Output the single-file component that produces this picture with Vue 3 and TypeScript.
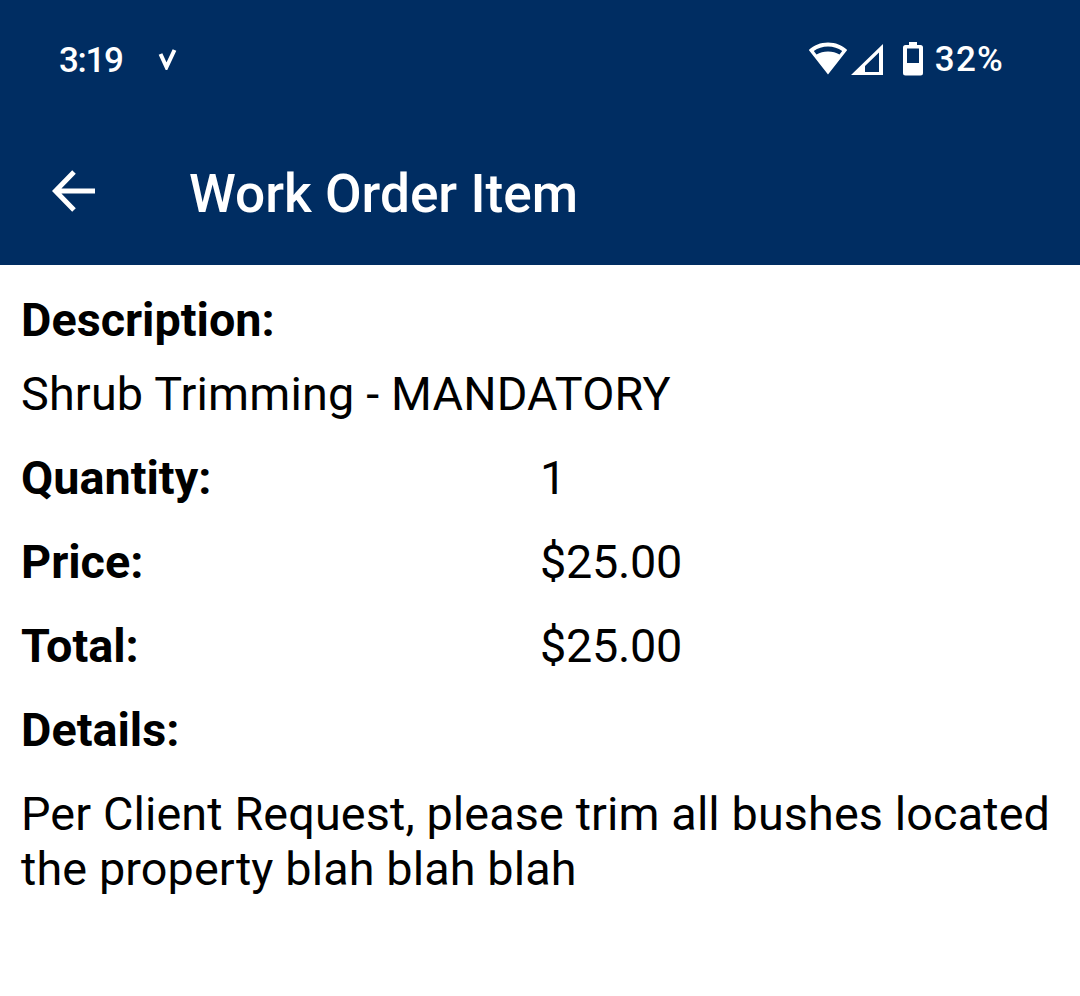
<script setup lang="ts">
interface Row { label: string; value: string }
const rows: Row[] = [
  { label: 'Quantity:', value: '1' },
  { label: 'Price:', value: '$25.00' },
  { label: 'Total:', value: '$25.00' },
]
</script>

<template>
  <div class="screen">
    <header class="top">
      <div class="status">
        <span class="time">3:19</span>
        <svg class="check" width="20" height="22" viewBox="0 0 20 22"><path d="M2.500 6 L8.500 19 L16.500 2" fill="none" stroke="#fff" stroke-width="4" /></svg>
        <div class="status-right">
          <svg class="wifi" width="40" height="34" viewBox="0 0 40 34"><path fill-rule="evenodd" d="M20 0.500C12.500 0.500 6 3.200 0.800 8L20 32.500 39.200 8C34 3.200 27.500 0.500 20 0.500ZM20 4.500C14.500 4.500 10 6 5.800 9L8.500 12.500C12 10.500 15.500 9.500 20 9.500S28 10.500 31.500 12.500L34.200 9C30 6 25.500 4.500 20 4.500Z" fill="#fff"/></svg>
          <svg class="signal" width="34" height="34" viewBox="0 0 34 34"><path fill-rule="evenodd" d="M33 2V33H1ZM29 10.500 15 24V30H29Z" fill="#fff"/></svg>
          <svg class="battery" width="20" height="34" viewBox="0 0 20 34"><path fill-rule="evenodd" d="M6 0H14V3H17.500Q20 3 20 5.500V31Q20 33.500 17.500 33.500H2.500Q0 33.500 0 31V5.500Q0 3 2.500 3H6ZM4 6.500V21H16V6.500Z" fill="#fff"/></svg>
          <span class="pct">32%</span>
        </div>
      </div>
      <div class="toolbar">
        <svg class="back" width="44" height="44" viewBox="0 0 44 44"><path d="M43 22H4M22 3 3.500 22 22 41" fill="none" stroke="#fff" stroke-width="5"/></svg>
        <h1 class="title">Work Order Item</h1>
      </div>
    </header>
    <main class="content">
      <div class="label line-desc">Description:</div>
      <div class="text line-value">Shrub Trimming - MANDATORY</div>
      <div v-for="row in rows" :key="row.label" class="row">
        <span class="label">{{ row.label }}</span>
        <span class="text value">{{ row.value }}</span>
      </div>
      <div class="label row">Details:</div>
      <p class="text details">Per Client Request, please trim all bushes located the property blah blah blah</p>
    </main>
  </div>
</template>

<style scoped>
.screen { width: 1080px; height: 996px; background: #fff; font-family: Roboto, sans-serif; color: #000; overflow: hidden; }
.top { background: #002d62; height: 265px; color: #fff; }
.status { height: 118px; display: flex; align-items: center; padding: 0 76px 0 59px; box-sizing: border-box; }
.time { font-size: 35px; font-weight: 500; width: 99px; letter-spacing: -1.3px; margin-top: 2px; }
.check { display: block; }
.status-right { margin-left: auto; display: flex; align-items: center; }
.wifi { margin-right: 2px; }
.signal { margin-right: 19px; }
.battery { margin-right: 12px; }
.pct { font-size: 35px; font-weight: 500; letter-spacing: 1.2px; }
.toolbar { height: 147px; display: flex; align-items: center; padding-left: 52px; }
.back { display: block; margin-right: 93px; margin-top: -1px; }
.title { margin: 0; font-size: 53.2px; font-weight: 500; margin-top: 5px; }
.content { padding: 0 21px; }
.label { font-size: 46.75px; font-weight: 700; line-height: 84px; }
.text { font-size: 46.75px; font-weight: 400; letter-spacing: 0.18px; }
.text.value { letter-spacing: -0.3px; }
.line-desc { line-height: 52px; margin-top: 29px; }
.line-value { line-height: 52px; margin-top: 22px; margin-bottom: 16px; }
.row { height: 84px; line-height: 84px; display: flex; }
.row .label { width: 519px; }
.text.details { margin: 15px 0 0; line-height: 55px; letter-spacing: 0.12px; }
</style>
